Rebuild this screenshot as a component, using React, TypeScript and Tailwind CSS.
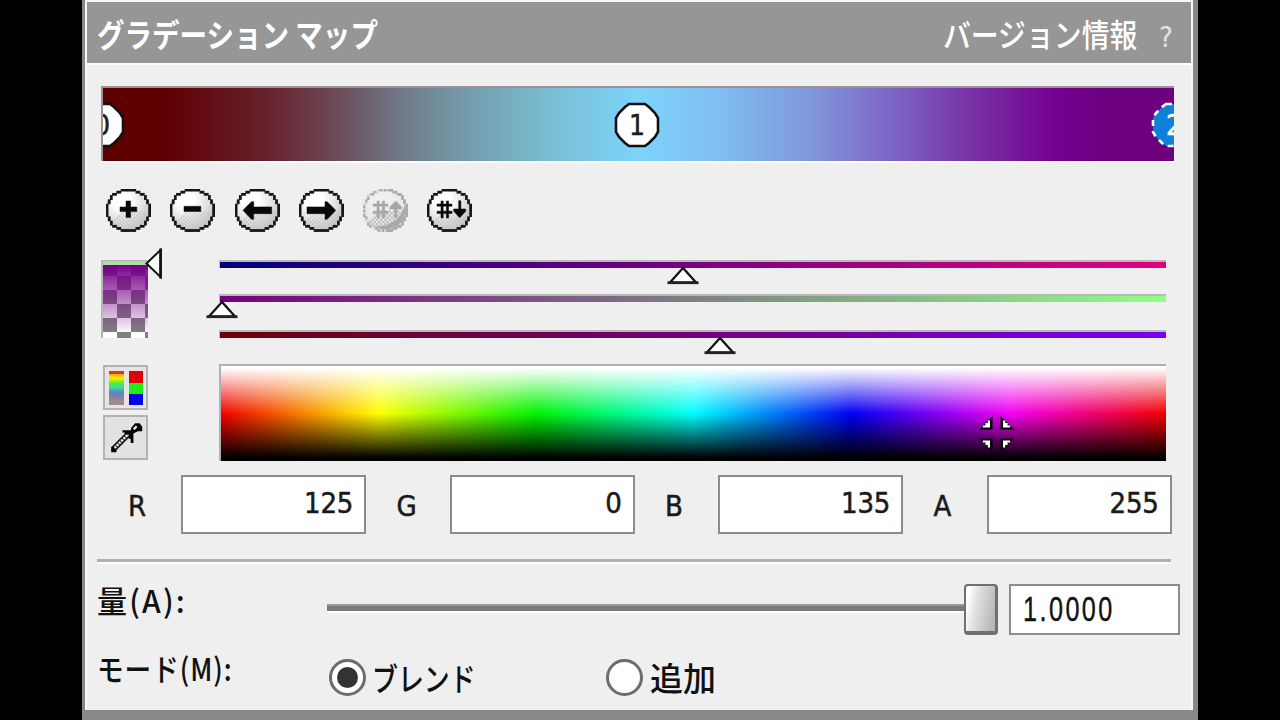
import type { ReactNode } from "react";
import { clsx } from "clsx";

type ToolName = "add" | "remove" | "prev" | "next" | "importNumber" | "exportNumber";

type Channel = {
  label: string;
  value: number;
};

const TOOLS: ToolName[] = ["add", "remove", "prev", "next", "importNumber", "exportNumber"];

const CHANNELS: Channel[] = [
  { label: "R", value: 125 },
  { label: "G", value: 0 },
  { label: "B", value: 135 },
  { label: "A", value: 255 },
];

const JP = "font-['Noto_Sans_CJK_JP','Liberation_Sans',sans-serif]";
const UI = "font-['DejaVu_Sans_Condensed','DejaVu_Sans','Noto_Sans',sans-serif]";

// Stepped disc on a 21x20 cell grid, one entry per outline cell
const CELL = 2.13;
const COLS = 21;
const ROWS = 20;

function insideDisc(x: number, y: number) {
  const dx = (x + 0.5 - COLS / 2) / (COLS / 2);
  const dy = (y + 0.5 - ROWS / 2) / (ROWS / 2);
  return dx * dx + dy * dy <= 1.01;
}

const discCells = Array.from({ length: COLS * ROWS }, (_, i) => ({ x: i % COLS, y: Math.floor(i / COLS) })).filter((c) =>
  insideDisc(c.x, c.y)
);

const outlineCells = discCells.filter(
  (c) =>
    !insideDisc(c.x - 1, c.y) || !insideDisc(c.x + 1, c.y) || !insideDisc(c.x, c.y - 1) || !insideDisc(c.x, c.y + 1)
);

const shadeCells = discCells.filter((c) => c.y > 9 && c.x + c.y > 17 && (c.x + c.y) % 2 === 0);

function Glyph({ name }: { name: ToolName }) {
  switch (name) {
    case "add":
      return <path d="M20 12h4.6v6h6.2v4.6h-6.2v5.8H20v-5.8h-6V18h6z" />;
    case "remove":
      return <path d="M14 17.3h16.8v5.2H14z" />;
    case "prev":
      return <path d="M8 21.3l2-2.1 2.1-2.1 2.2-2.2 2.2-2.2h2.2v5.2h18v6.8h-18v5.6h-2.2l-2.2-2.2-2.2-2.3-2.1-2.2z" />;
    case "next":
      return <path d="M36.7 21.3l-2-2.1-2.1-2.1-2.2-2.2-2.2-2.2H26v5.2H8v6.8h18v5.6h2.2l2.2-2.2 2.2-2.3 2.1-2.2z" />;
    case "importNumber":
      return (
        <path d="M14 12h2.2v3h3.2v-3h2.2v3H25v2.2h-3.4v5H25v2.2h-3.4V29h-2.2v-4.6h-3.2V29H14v-4.6h-4v-2.2h4v-5h-4V15h4zM16.2 17.2v5h3.2v-5zM31.7 28.7v-8.7h-5v-2l6-6 6 6v2h-5v8.7z" />
      );
    case "exportNumber":
      return (
        <path d="M14 12h2.2v3h3.2v-3h2.2v3H25v2.2h-3.4v5H25v2.2h-3.4V29h-2.2v-4.6h-3.2V29H14v-4.6h-4v-2.2h4v-5h-4V15h4zM16.2 17.2v5h3.2v-5zM31.7 11.7h2.2v8.3h4.8v2.2l-6 6.5-6-6.5V20h5z" />
      );
  }
}

function ToolButton({ name }: { name: ToolName }) {
  const disabled = name === "importNumber";
  const ink = disabled ? "#a6a6a6" : "#080808";

  return (
    <button className="block h-[43px] w-[45px]" disabled={disabled} aria-label={name}>
      <svg width="45" height="43" viewBox="0 0 45 43">
        <defs>
          <radialGradient id={`disc-${name}`} cx="0.35" cy="0.25" r="0.8">
            <stop offset="0.25" stopColor={disabled ? "#efefef" : "#fff"} />
            <stop offset="1" stopColor={disabled ? "#e4e4e4" : "#c4c4c4"} />
          </radialGradient>
        </defs>
        <ellipse cx="22.4" cy="21.3" rx="21" ry="20" fill={`url(#disc-${name})`} />
        {shadeCells.map((c) => (
          <rect
            key={`s${c.x}-${c.y}`}
            x={c.x * CELL}
            y={c.y * CELL}
            width={CELL}
            height={CELL}
            fill={disabled ? "#a9a9a9" : "#c0c0c0"}
            opacity={disabled ? 0.7 : 0.55}
          />
        ))}
        {disabled && <path d="M41.5 16A20 19 0 0 1 12 37.5Q21 38 30 33T41.5 16z" fill="#a9a9a9" />}
        {outlineCells.map((c) => (
          <rect
            key={`o${c.x}-${c.y}`}
            x={c.x * CELL - 0.3}
            y={c.y * CELL - 0.3}
            width={CELL + 0.6}
            height={CELL + 0.6}
            fill={disabled ? ((c.x + c.y) % 2 && c.x < 12 ? "#d0d0d0" : "#a9a9a9") : "#161616"}
          />
        ))}
        <g fill={ink} stroke={ink} strokeWidth="0.5" fillRule="evenodd">
          <Glyph name={name} />
        </g>
      </svg>
    </button>
  );
}

function UpMarker({ className }: { className: string }) {
  return (
    <svg className={clsx("absolute top-[6px]", className)} width="32" height="19" viewBox="0 0 32 19">
      <path d="M16 2L3 16.5h26z" fill="#fff" stroke="#111" strokeWidth="2.2" />
      <path d="M.5 15.3h31v2.8H.5z" fill="#222" />
    </svg>
  );
}

function ColorTrack({ className, marker }: { className: string; marker: string }) {
  return (
    <div className="relative h-2">
      <div className={clsx("h-2 border-t-2 border-l border-[#b9b9b9]", className)} />
      <UpMarker className={marker} />
    </div>
  );
}

// Glyphs are condensed horizontally; the outer box keeps the layout width
function Condensed({ className, inner, children }: { className?: string; inner: string; children: ReactNode }) {
  return (
    <span className={clsx("block whitespace-nowrap", JP, className)}>
      <span className={clsx("inline-block origin-left", inner)}>{children}</span>
    </span>
  );
}

function TitleBar() {
  return (
    <header className="flex h-[61px] justify-between bg-[#969696] pl-[10px] pr-[16px] text-white">
      <Condensed className="w-[290px] pt-[8px] text-[32px] leading-[46px] font-bold" inner="scale-x-[0.86]">
        グラデーション マップ
      </Condensed>
      <div className="flex gap-[20px]">
        <Condensed className="w-[196px] pt-[8px] text-[32px] leading-[46px] font-medium" inner="scale-x-[0.87]">
          バージョン情報
        </Condensed>
        <span className={clsx("w-4 pt-[12px] text-[29px] leading-[46px] text-[#e4e4e4]", UI)}>?</span>
      </div>
    </header>
  );
}

function Stop({ label, selected, className }: { label: string; selected?: boolean; className: string }) {
  return (
    <svg className={clsx("absolute top-[14px]", className)} width="46" height="46" viewBox="0 0 46 46">
      <path
        d="M15 2h16l4 3 6 6 3 5v14l-3 5-6 6-4 3H15l-4-3-6-6-3-5V16l3-5 6-6z"
        fill={selected ? "#0f80d7" : "#fff"}
        stroke={selected ? "#fff" : "#111"}
        strokeWidth="2.6"
        strokeDasharray={selected ? "6 5" : undefined}
      />
      <text
        x="23"
        y="33"
        textAnchor="middle"
        fontSize="28"
        fontFamily="DejaVu Sans Condensed, DejaVu Sans, sans-serif"
        fill={selected ? "#fff" : "#1c1c1c"}
        stroke={selected ? "#fff" : "#1c1c1c"}
        strokeWidth="0.5"
      >
        {label}
      </text>
    </svg>
  );
}

function GradientBar() {
  return (
    <div className="ml-[14px] mt-[21px] h-[77px] w-[1073px] border-b-2 border-b-white">
      <div className="relative h-[75px] overflow-hidden border-t-2 border-l-2 border-[#9b9393] bg-[linear-gradient(90deg,#5e0000_0%,#600004_6%,#66202a_15%,#6c4551_21%,#707a89_28%,#759cac_34%,#7abfd4_42%,#7dd3fb_50%,#80c0f4_57%,#8098dc_66%,#7c5cc0_75%,#7838aa_80%,#77209e_84%,#740090_89%,#6e0080_94%,#6e0080_100%)]">
        <Stop label="0" className="-left-[24px]" />
        <Stop label="1" className="left-[511px]" />
        <Stop label="2" selected className="left-[1048px]" />
      </div>
    </div>
  );
}

function AlphaPicker() {
  return (
    <div className="relative w-[47px]">
      <div className="h-[78px] w-[47px] border-t border-l-2 border-[#b5b5b5]">
        <div className="h-[4px] bg-[#a9dfa1]" />
        <div className="h-[73px] [background-image:linear-gradient(#76008a,#76008a00_95%),repeating-conic-gradient(#808080_0_25%,#fff_0_50%)] [background-position:0_0,0_-17px] [background-size:100%_100%,28px_28px]" />
      </div>
      <svg className="absolute -top-[13px] left-[43px]" width="20" height="34" viewBox="0 0 20 34">
        <path d="M2.5 16.5L16.5 3v27z" fill="#fff" stroke="#111" strokeWidth="2" />
        <path d="M15.3 1.5h2.6v30h-2.6z" fill="#111" />
      </svg>
    </div>
  );
}

function PaletteButton() {
  return (
    <button className="flex h-[45px] w-[45px] justify-center gap-[5px] border-2 border-[#b2b2b2] bg-[#e9e3e6] pt-[4px]">
      <span className="h-[34px] w-[15px] bg-[linear-gradient(#c8401c_0_8%,#ff9c10_9%,#fff000_20%,#40f030_38%,#40e0a0_46%,#5090c0_62%,#7c7cac_74%,#a08890_88%)]" />
      <span className="flex flex-col">
        <span className="h-[12px] w-[14px] bg-[#e00008]" />
        <span className="h-[11px] w-[14px] bg-[#18f018]" />
        <span className="h-[11px] w-[14px] bg-[#0000e8]" />
      </span>
    </button>
  );
}

function EyedropperButton() {
  return (
    <button className="mt-[5px] block h-[45px] w-[45px] border-2 border-[#b2b2b2] bg-[#e2e2e2]">
      <svg width="41" height="41" viewBox="0 0 41 41">
        <path d="M8 32.5L22.5 18" stroke="#1a1a1a" strokeWidth="6" />
        <path d="M9.5 31L23 17.5" stroke="#f2f2f2" strokeWidth="2.4" strokeDasharray="2.2 1" />
        <path d="M6.2 30h3v2h2.2v3.2H6.2z" fill="#000" />
        <path d="M17.5 13.2h8.6v-2.2l4-4.8h4.4l2.7 3.2v4.8h-4.4l-4.4 2.2v9.6h-2.7v-4.2h-2v-4.2h-4v-2.2h-2.2z" fill="#000" />
        <path d="M28.7 12.2l3-3" stroke="#f2f2f2" strokeWidth="2.2" />
      </svg>
    </button>
  );
}

function Spectrum() {
  return (
    <div className="relative mt-[26px] h-[97px] border-t-2 border-l-2 border-[#b0b0b0] [background-image:linear-gradient(#fff_2%,#ffffff00_50%,#00000000_50%,#000_97%),linear-gradient(90deg,#f00000,#ffff00_16.7%,#00f400_33.3%,#00ffff_50%,#0000f4_66.7%,#f400f4_83.3%,#f00000)]">
      <svg className="absolute left-[757px] top-[50px]" width="37" height="38" viewBox="0 0 37 38">
        <path d="M14.5 0v13.5H1zM22.5 0v13.5H36zM14.5 36V22.5H1zM22.5 36V22.5H36z" fill="#000" />
        <path
          d="M12 4.5v7H4.8v-2h2.6V7h2.4V4.5zM25 4.5v7h7.2v-2h-2.6V7h-2.4V4.5zM12 31.5v-7H4.8v2h2.6V29h2.4v2.5zM25 31.5v-7h7.2v2h-2.6V29h-2.4v2.5z"
          fill="#fff"
        />
      </svg>
    </div>
  );
}

function ColorEditor() {
  return (
    <div className="ml-[14px] mt-[28px] flex h-[201px]">
      <div className="w-[118px]">
        <AlphaPicker />
        <div className="ml-[2px] mt-[27px]">
          <PaletteButton />
          <EyedropperButton />
        </div>
      </div>
      <div className="w-[947px]">
        <ColorTrack className="bg-[linear-gradient(90deg,#00007c,#7c0084_50%,#e4007c)]" marker="left-[448px]" />
        <div className="h-[26px]" />
        <ColorTrack className="bg-[linear-gradient(90deg,#740080,#808084_50%,#90ff88)]" marker="-left-[13px]" />
        <div className="h-[28px]" />
        <ColorTrack className="bg-[linear-gradient(90deg,#6c0008,#74007c_50%,#7800f0)]" marker="left-[485px]" />
        <Spectrum />
      </div>
    </div>
  );
}

function ChannelFields() {
  return (
    <div className="ml-[41px] mt-[14px] flex h-[59px]">
      {CHANNELS.map((c) => (
        <div key={c.label} className={clsx("flex w-[268.5px] shrink-0 text-[29px] text-[#1a1a1a]", UI)}>
          <span className="w-[53px] pt-[9px] leading-[44px] [-webkit-text-stroke:0.5px]">{c.label}</span>
          <div className="h-[59px] w-[185px] border-[2.5px] border-[#8c8c8c] bg-white pr-[11px] text-right leading-[52px] tracking-[-0.3px] [-webkit-text-stroke:0.5px]">
            {c.value}
          </div>
        </div>
      ))}
    </div>
  );
}

function Radio({ checked }: { checked?: boolean }) {
  return (
    <span className="flex size-[37px] items-center justify-center rounded-full border-[3px] border-[#6c6c6c] bg-white">
      {checked && <span className="size-[21px] rounded-full bg-[#333]" />}
    </span>
  );
}

function AmountRow() {
  return (
    <div className="ml-[10px] mt-[20px] flex h-[51px]">
      <Condensed className="w-[230px] text-[31px] leading-[32px] font-medium tracking-[2.2px]" inner="scale-x-[0.97]">
        量(A):
      </Condensed>
      <div className="relative w-[682px]">
        <div className="mt-[20px] h-[9px] w-[640px] border-t-2 border-b-2 border-t-[#989898] border-b-white bg-[#7a7a7a]" />
        <div className="absolute left-[637px] top-0 h-[51px] w-[34px] rounded-[4px] border-2 border-b-4 border-r-[3px] border-[#707070] bg-[linear-gradient(100deg,#fff_10%,#e2e2e2_35%,#b8b8b8_90%)]" />
      </div>
      <div className="h-[51px] w-[171px] border-[2.5px] border-[#8c8c8c] bg-white pl-[12px]">
        <span className="inline-block origin-left scale-x-[0.72] whitespace-nowrap font-['Liberation_Sans',sans-serif] text-[35px] leading-[45px] tracking-[3.4px] text-[#111] [-webkit-text-stroke:0.4px]">
          1.0000
        </span>
      </div>
    </div>
  );
}

function ModeRow() {
  return (
    <div className="ml-[10px] mt-[14px] flex">
      <Condensed className="w-[232px] text-[31px] leading-[38px] font-medium tracking-[1.1px]" inner="scale-x-[0.86]">
        モード(M):
      </Condensed>
      <div className="flex w-[277px] gap-[6px] pt-[10px]">
        <Radio checked />
        <Condensed className="w-[110px] text-[32px] leading-[36px] font-medium" inner="scale-x-[0.81]">
          ブレンド
        </Condensed>
      </div>
      <div className="flex gap-[7px] pt-[10px]">
        <Radio />
        <Condensed className="w-[80px] text-[33px] leading-[36px] font-medium" inner="">
          追加
        </Condensed>
      </div>
    </div>
  );
}

export default function App() {
  return (
    <div className="h-[720px] w-[1280px] overflow-hidden bg-black">
      <div className="ml-[82px] h-[720px] w-[1116px] border-b-[10px] border-l-[3px] border-r-[5px] border-[#888]">
        <main className="h-[710px] border-x-2 border-t-2 border-[#f8f8f8] bg-[#efefef] text-[#111]">
          <TitleBar />
          <div className="h-[2px] bg-white" />
          <GradientBar />
          <div className="ml-[19px] mt-[26px] flex gap-[19.3px]">
            {TOOLS.map((name) => (
              <ToolButton key={name} name={name} />
            ))}
          </div>
          <ColorEditor />
          <ChannelFields />
          <div className="ml-[10px] mt-[25px] h-[5px] w-[1074px] border-t-[3px] border-b-2 border-t-[#b0b0b0] border-b-white" />
          <AmountRow />
          <ModeRow />
        </main>
      </div>
    </div>
  );
}
